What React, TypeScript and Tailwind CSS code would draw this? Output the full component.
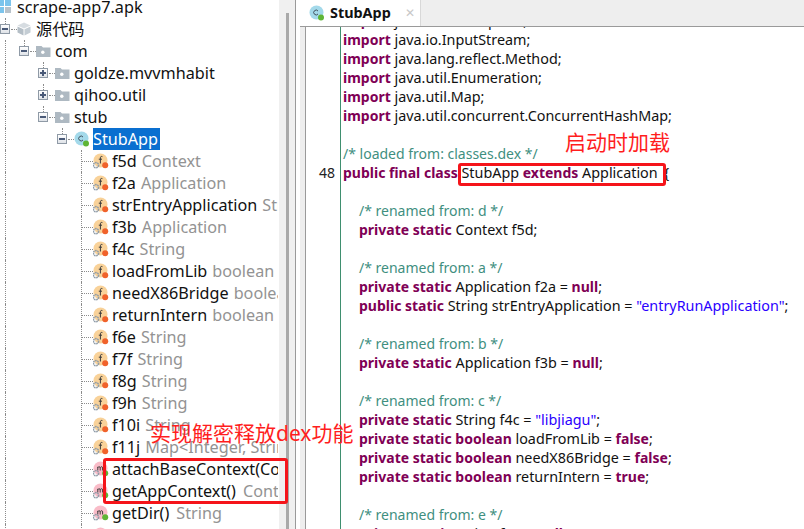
import React from "react";

const sans = "font-['Noto_Sans','Noto_Sans_CJK_SC',sans-serif]";

function Gear({ x, y }: { x: number; y: number }) {
  return (
    <g>
      <circle cx={x} cy={y} r="2.6" fill="none" stroke="#8f9ca8" strokeWidth="1.6" strokeDasharray="1.6 .6" />
    </g>
  );
}

function NodeIcon({ kind }: { kind: "c" | "f" | "m" }) {
  const fill = kind === "c" ? "#a3d9ea" : kind === "f" ? "#f9d299" : "#f9bcc8";
  const dot = kind === "f" ? "#f0622b" : "#5fb536";
  return (
    <svg width="16" height="16" viewBox="0 0 16 16" className="shrink-0">
      <circle cx="7.5" cy="7.5" r="7" fill={fill} />
      {kind === "c" && <path d="M9 6 A2.4 2.4 0 1 0 9 9" fill="none" stroke="#40505c" strokeWidth="1" />}
      {kind === "f" && <path d="M9.4 3.6 C7.8 3 7.4 4 7.4 5 L7.4 10.5 M5.8 6.2 H9" fill="none" stroke="#3b3b3b" strokeWidth="1" />}
      {kind === "m" && <path d="M4.8 9.5 V5.8 M4.8 6.6 C5.4 5.4 7.2 5.4 7.2 6.8 V9.5 M7.2 6.6 C7.8 5.4 9.6 5.4 9.6 6.8 V9.5" fill="none" stroke="#3b3b3b" strokeWidth="1" />}
      {kind !== "c" && <Gear x={3} y={12.2} />}
      <circle cx={kind === "c" ? 12 : 12.2} cy={kind === "c" ? 12.5 : 12.2} r="3" fill={dot} />
    </svg>
  );
}

function Folder() {
  return (
    <svg width="15" height="13" viewBox="0 0 15 13" className="shrink-0">
      <path d="M0 1 H5.5 L7 2.5 H14.5 V12 H0 Z" fill="#aeb9c2" />
      <circle cx="6.8" cy="7.2" r="1.7" fill="#fff" />
    </svg>
  );
}

function Box() {
  return (
    <svg width="14" height="14" viewBox="0 0 14 14" className="shrink-0">
      <path d="M7 .5 L13.5 3.5 L7 6.5 L.5 3.5 Z" fill="#d6dce1" />
      <path d="M.5 4.4 L6.5 7.2 V13.5 L.5 10.6 Z" fill="#b4bec6" />
      <path d="M13.5 4.4 L7.5 7.2 V13.5 L13.5 10.6 Z" fill="#c4cdd4" />
    </svg>
  );
}

function Expander({ open }: { open: boolean }) {
  return (
    <span className="relative block h-[10px] w-[10px] border border-[#8f9aa6] bg-gradient-to-b from-white to-[#dfe3e8]">
      <span className="absolute left-[1px] top-[3px] h-[2px] w-[6px] bg-[#4a5a78]" />
      {!open && <span className="absolute left-[3px] top-[1px] h-[6px] w-[2px] bg-[#4a5a78]" />}
    </span>
  );
}

type Cell = "v" | "b" | "leaf" | "open" | "closed";

function GuideCell({ type }: { type: Cell }) {
  const dots = "border-[#8c8c8c] border-dotted";
  return (
    <span className="relative block h-[22px] w-[19px] shrink-0">
      {type === "v" && <span className={`absolute bottom-0 left-[5px] top-0 border-l ${dots}`} />}
      {type === "leaf" && <span className={`absolute bottom-0 left-[5px] top-0 border-l ${dots}`} />}
      {type === "leaf" && <span className={`absolute left-[5px] top-[11px] w-[12px] border-t ${dots}`} />}
      {(type === "open" || type === "closed") && (
        <>
          <span className={`absolute left-[11px] top-[11px] w-[6px] border-t ${dots}`} />
          <span className={`absolute left-[5px] top-0 h-[6px] border-l ${dots}`} />
          <span className="absolute left-0 top-[6px]">
            <Expander open={type !== "closed"} />
          </span>
        </>
      )}
    </span>
  );
}

type Row = {
  cells: Cell[];
  icon: "apk" | "box" | "folder" | "c" | "f" | "m";
  name: string;
  type?: string;
  selected?: boolean;
};

const F = (name: string, type: string): Row => ({ cells: ["v", "b", "b", "b", "leaf"], icon: "f", name, type });
const M = (name: string, type: string): Row => ({ cells: ["v", "b", "b", "b", "leaf"], icon: "m", name, type });

const rows: Row[] = [
  { cells: [], icon: "apk", name: "scrape-app7.apk" },
  { cells: ["open"], icon: "box", name: "源代码" },
  { cells: ["v", "open"], icon: "folder", name: "com" },
  { cells: ["v", "b", "closed"], icon: "folder", name: "goldze.mvvmhabit" },
  { cells: ["v", "b", "closed"], icon: "folder", name: "qihoo.util" },
  { cells: ["v", "b", "open"], icon: "folder", name: "stub" },
  { cells: ["v", "b", "b", "open"], icon: "c", name: "StubApp", selected: true },
  F("f5d", "Context"),
  F("f2a", "Application"),
  F("strEntryApplication", "String"),
  F("f3b", "Application"),
  F("f4c", "String"),
  F("loadFromLib", "boolean"),
  F("needX86Bridge", "boolean"),
  F("returnIntern", "boolean"),
  F("f6e", "String"),
  F("f7f", "String"),
  F("f8g", "String"),
  F("f9h", "String"),
  F("f10i", "String"),
  F("f11j", "Map<Integer, String>"),
  M("attachBaseContext(Context)", "void"),
  M("getAppContext()", "Context"),
  M("getDir()", "String"),
  M("getCurrentApplication()", "Application"),
];

function TreeRow({ row }: { row: Row }) {
  const icon =
    row.icon === "apk" ? (
      <svg width="14" height="14" viewBox="0 0 14 14" className="shrink-0">
        <rect x="0" y="0" width="6" height="6" fill="#7cc4ec" />
        <rect x="7" y="0" width="6" height="6" fill="#7cc4ec" />
        <rect x="0" y="7" width="6" height="6" fill="#7cc4ec" />
        <rect x="7" y="7" width="6" height="6" fill="#b8c2ca" />
      </svg>
    ) : row.icon === "box" ? (
      <Box />
    ) : row.icon === "folder" ? (
      <Folder />
    ) : (
      <NodeIcon kind={row.icon} />
    );
  return (
    <div className="flex h-[22px] items-center whitespace-nowrap">
      {row.cells.map((c, i) => (
        <GuideCell key={i} type={c} />
      ))}
      <span className="ml-[-2px] flex w-[19px] shrink-0 items-center">{icon}</span>
      <span className={`text-[16.2px] leading-[22px] ${row.selected ? "bg-[#0a6fd0] pr-[2px] text-white" : "text-[#111]"}`}>{row.name}</span>
      {row.type && <span className={`${row.icon === "m" ? "ml-[7px]" : "ml-[5px]"} text-[16.2px] leading-[22px] text-[#939393]`}>{row.type}</span>}
    </div>
  );
}

const K = ({ children }: { children: React.ReactNode }) => <span className="text-[14px] font-bold text-[#7f0055]">{children}</span>;
const C = ({ children }: { children: React.ReactNode }) => <span className="text-[14px] text-[#3f8f7f]">{children}</span>;
const S = ({ children }: { children: React.ReactNode }) => <span className="text-[#2a00ff]">{children}</span>;

type Line = { n?: string; ind?: boolean; c: React.ReactNode };

const lines: Line[] = [
  { c: <><K>import</K> java.io.IOException;</> },
  { c: <><K>import</K> java.io.InputStream;</> },
  { c: <><K>import</K> java.lang.reflect.Method;</> },
  { c: <><K>import</K> java.util.Enumeration;</> },
  { c: <><K>import</K> java.util.Map;</> },
  { c: <><K>import</K> java.util.concurrent.ConcurrentHashMap;</> },
  { c: "" },
  { c: <C>/* loaded from: classes.dex */</C> },
  { n: "48", c: <><K>public final class</K> StubApp <K>extends</K> Application<span className="ml-[6px]">{"{"}</span></> },
  { c: "" },
  { ind: true, c: <C>/* renamed from: d */</C> },
  { ind: true, c: <><K>private static</K> Context f5d;</> },
  { c: "" },
  { ind: true, c: <C>/* renamed from: a */</C> },
  { ind: true, c: <><K>private static</K> Application f2a = <K>null</K>;</> },
  { ind: true, c: <><K>public static</K> String strEntryApplication = <S>"entryRunApplication"</S>;</> },
  { c: "" },
  { ind: true, c: <C>/* renamed from: b */</C> },
  { ind: true, c: <><K>private static</K> Application f3b = <K>null</K>;</> },
  { c: "" },
  { ind: true, c: <C>/* renamed from: c */</C> },
  { ind: true, c: <><K>private static</K> String f4c = <S>"libjiagu"</S>;</> },
  { ind: true, c: <><K>private static boolean</K> loadFromLib = <K>false</K>;</> },
  { ind: true, c: <><K>private static boolean</K> needX86Bridge = <K>false</K>;</> },
  { ind: true, c: <><K>private static boolean</K> returnIntern = <K>true</K>;</> },
  { c: "" },
  { ind: true, c: <C>/* renamed from: e */</C> },
  { ind: true, c: <><K>private static</K> String f6e = <K>null</K>;</> },
];

export default function App() {
  return (
    <div className={`relative flex h-[529px] w-[804px] overflow-hidden bg-white ${sans}`}>
      <div className="mr-[1px] h-full w-[278px] shrink-0 overflow-hidden">
        <div className="mt-[-4px]">
          {rows.map((r, i) => (
            <TreeRow key={i} row={r} />
          ))}
        </div>
      </div>
      <div className="flex h-full w-[16px] shrink-0 justify-center bg-[#f0f0f0] pt-[13px]">
        <div className="h-full w-[3px] bg-[#a9a9a9]" />
      </div>
      <div className="h-full w-[5px] shrink-0 border-l border-[#9a9a9a]" />
      <div className="flex h-full min-w-0 flex-1 flex-col bg-[#eeeeee]">
        <div className="flex h-[27px] shrink-0 items-end border-b border-[#9a9a9a]">
          <div className="flex h-[26px] w-[121px] items-center gap-[5px] border-r border-[#d8d8d8] bg-white pl-[9px]">
            <NodeIcon kind="c" />
            <span className="text-[14.4px] font-bold text-[#111]">StubApp</span>
            <span className="ml-[9px] text-[12px] leading-none text-[#c8c8c8]">✕</span>
          </div>
        </div>
        <div className="ml-[5px] flex min-h-0 flex-1 overflow-hidden border-l border-[#9a9a9a] bg-white">
          <div className="w-[35px] shrink-0 border-r border-[#3f8f6f] text-right text-[14px] leading-[19px] text-[#222]">
            <div className="mt-[-16px] pr-[5px]">
              {lines.map((l, i) => (
                <div key={i} className="h-[19px]">{l.n ?? ""}</div>
              ))}
            </div>
          </div>
          <div className="min-w-0 flex-1 overflow-hidden whitespace-nowrap pl-[2px] text-[14.35px] leading-[19px] text-[#111]">
            <div className="mt-[-16px]">
              {lines.map((l, i) => (
                <div key={i} className={`h-[19px] ${l.ind ? "pl-[16px]" : ""}`}>{l.c}</div>
              ))}
            </div>
          </div>
        </div>
      </div>
      <div className="absolute left-[458px] top-[163px] h-[23px] w-[208px] rounded-[3px] border-[3px] border-[#f5141a]" />
      <div className="absolute left-[103px] top-[458px] h-[46px] w-[185px] rounded-[3px] border-[3px] border-[#f5141a]" />
      <div className="absolute left-[565px] top-[128px] text-[21px] leading-[28px] text-[#ff1e1e]">启动时加载</div>
      <div className="absolute left-[150px] top-[419px] whitespace-nowrap text-[21px] leading-[28px] text-[#ff1e1e]">实现解密释放dex功能</div>
    </div>
  );
}
